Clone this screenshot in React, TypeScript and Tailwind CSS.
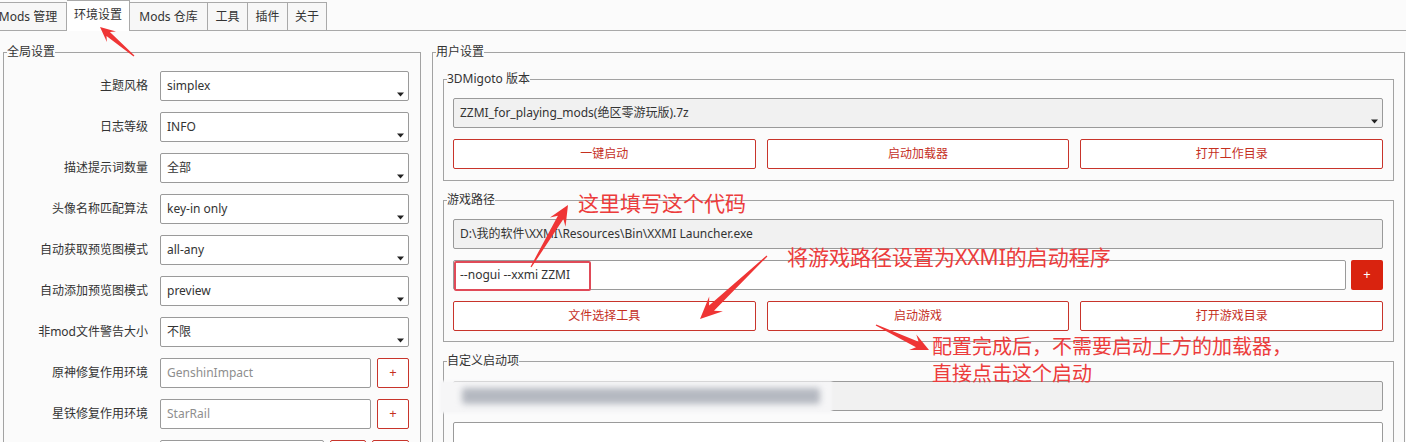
import React from "react";

type Pt = [number, number];

// screenshot-tool style arrow: thin tail, widening shaft, swept head
function arrowPoints(tail: Pt, tip: Pt, head = 18, hw = 9, sw = 3.5) {
  const [x1, y1] = tail;
  const [x2, y2] = tip;
  const dx = x2 - x1;
  const dy = y2 - y1;
  const len = Math.hypot(dx, dy);
  const ux = dx / len;
  const uy = dy / len;
  const nx = -uy;
  const ny = ux;
  const neckX = x2 - ux * head * 0.72;
  const neckY = y2 - uy * head * 0.72;
  const backX = x2 - ux * head;
  const backY = y2 - uy * head;
  const pts: Pt[] = [
    [x1 + nx * 0.6, y1 + ny * 0.6],
    [neckX + nx * sw, neckY + ny * sw],
    [backX + nx * hw, backY + ny * hw],
    [x2, y2],
    [backX - nx * hw, backY - ny * hw],
    [neckX - nx * sw, neckY - ny * sw],
    [x1 - nx * 0.6, y1 - ny * 0.6],
  ];
  return pts.map(p => `${p[0].toFixed(1)},${p[1].toFixed(1)}`).join(" ");
}

const TABS = [
  { label: "Mods 管理", className: "w-[78px] -ml-[11px] border-l" },
  { label: "环境设置", className: "w-[63px]", selected: true },
  { label: "Mods 仓库", className: "w-[78px]" },
  { label: "工具", className: "w-[40px]" },
  { label: "插件", className: "w-[40px]" },
  { label: "关于", className: "w-[39px]" },
];

function Tabs() {
  return (
    <div className="flex h-[31px] items-end border-b border-[#a9a9a9]">
      {TABS.map(tab => (
        <div
          key={tab.label}
          className={
            tab.selected
              ? "-mb-px flex h-[31px] shrink-0 items-center justify-center border-t border-r border-[#a9a9a9] bg-white pb-[2px] text-[12px] text-[#333] " +
                tab.className
              : "flex h-[28px] shrink-0 items-center justify-center border-t border-r border-[#a9a9a9] bg-[#f7f7f7] text-[12px] text-[#333] " +
                tab.className
          }
        >
          {tab.label}
        </div>
      ))}
    </div>
  );
}

function Group({
  title,
  className,
  children,
}: {
  title: string;
  className: string;
  children: React.ReactNode;
}) {
  return (
    <fieldset className={"min-w-0 border border-[#a3a3a3] p-0 " + className}>
      <legend className="ml-[3px] p-0 text-[12px] leading-[16px] text-[#333]">
        {title}
      </legend>
      {children}
    </fieldset>
  );
}

function Caret() {
  return (
    <svg
      className="absolute right-[4px] bottom-[3px]"
      width="7"
      height="5"
      viewBox="0 0 7 5"
    >
      <path d="M0 0.5h7L3.5 4.5z" fill="#222" />
    </svg>
  );
}

function Combo({ value, gray }: { value: string; gray?: boolean }) {
  return (
    <div
      className={
        gray
          ? "relative flex h-[30px] w-full items-center rounded-[2px] border border-[#9a9a9a] bg-[#f1f1f1] pl-[6px] text-[12px] text-[#333]"
          : "relative flex h-[30px] w-full items-center rounded-[2px] border border-[#9a9a9a] bg-white pl-[6px] text-[12px] text-[#333]"
      }
    >
      {value}
      <Caret />
    </div>
  );
}

function Field({
  value,
  placeholder,
  gray,
  className = "",
}: {
  value?: string;
  placeholder?: string;
  gray?: boolean;
  className?: string;
}) {
  return (
    <div
      className={
        (gray
          ? "flex h-[30px] items-center rounded-[2px] border border-[#9a9a9a] bg-[#f1f1f1] pl-[6px] text-[12px] "
          : "flex h-[30px] items-center rounded-[2px] border border-[#9a9a9a] bg-white pl-[6px] text-[12px] ") +
        (value ? "text-[#333] " : "text-[#8e8e8e] ") +
        className
      }
    >
      {value ?? placeholder}
    </div>
  );
}

function OutlineButton({
  children,
  className = "",
}: {
  children?: React.ReactNode;
  className?: string;
}) {
  return (
    <div
      className={
        "flex h-[30px] items-center justify-center rounded-[2px] border border-[#c8342b] bg-white text-[12px] text-[#c5301f] " +
        className
      }
    >
      {children}
    </div>
  );
}

function PlusButton({ className = "" }: { className?: string }) {
  return (
    <OutlineButton className={"shrink-0 text-[13px] " + className}>+</OutlineButton>
  );
}

const COMBO_ROWS = [
  ["主题风格", "simplex"],
  ["日志等级", "INFO"],
  ["描述提示词数量", "全部"],
  ["头像名称匹配算法", "key-in only"],
  ["自动获取预览图模式", "all-any"],
  ["自动添加预览图模式", "preview"],
  ["非mod文件警告大小", "不限"],
];

function Row({ label, children }: { label: string; children: React.ReactNode }) {
  return (
    <div className="flex items-center">
      <div className="w-[144px] shrink-0 text-right text-[12px] text-[#333]">
        {label}
      </div>
      <div className="ml-[12px] flex w-[249px] gap-[6px]">{children}</div>
    </div>
  );
}

function GlobalSettings() {
  return (
    <Group title="全局设置" className="ml-[3px] w-[418px] shrink-0">
      <div className="flex flex-col gap-[11px] pt-[11px] pb-[12px]">
        {COMBO_ROWS.map(([label, value]) => (
          <Row key={label} label={label}>
            <Combo value={value} />
          </Row>
        ))}
        <Row label="原神修复作用环境">
          <Field placeholder="GenshinImpact" className="flex-1" />
          <PlusButton className="w-[32px]" />
        </Row>
        <Row label="星铁修复作用环境">
          <Field placeholder="StarRail" className="flex-1" />
          <PlusButton className="w-[32px]" />
        </Row>
        {/* only the top edge of this row is on screen */}
        <Row label="">
          <Field placeholder="" className="flex-1" />
          <OutlineButton className="w-[36px] shrink-0" />
          <OutlineButton className="w-[37px] shrink-0" />
        </Row>
      </div>
    </Group>
  );
}

function UserSettings() {
  return (
    <Group title="用户设置" className="ml-[11px] w-[973px] shrink-0">
      <div className="flex flex-col gap-[11px] px-[10px] pt-[11px] pb-[12px]">
        <Group title="3DMigoto 版本" className="w-full">
          <div className="flex flex-col gap-[11px] pt-[11px] pr-[10px] pb-[11px] pl-[9px]">
            <Combo value="ZZMI_for_playing_mods(绝区零游玩版).7z" gray />
            <div className="grid grid-cols-3 gap-[11px]">
              <OutlineButton>一键启动</OutlineButton>
              <OutlineButton>启动加载器</OutlineButton>
              <OutlineButton>打开工作目录</OutlineButton>
            </div>
          </div>
        </Group>
        <Group title="游戏路径" className="w-full">
          <div className="flex flex-col gap-[11px] pt-[11px] pr-[10px] pb-[10px] pl-[9px]">
            <Field value="D:\我的软件\XXMI\Resources\Bin\XXMI Launcher.exe" gray />
            <div className="flex gap-[5px]">
              <Field value="--nogui --xxmi ZZMI" className="flex-1" />
              <div className="flex h-[30px] w-[32px] shrink-0 items-center justify-center rounded-[2px] bg-[#d9230f] text-[13px] text-white">
                +
              </div>
            </div>
            <div className="grid grid-cols-3 gap-[11px]">
              <OutlineButton>文件选择工具</OutlineButton>
              <OutlineButton>启动游戏</OutlineButton>
              <OutlineButton>打开游戏目录</OutlineButton>
            </div>
          </div>
        </Group>
        <Group title="自定义启动项" className="w-full">
          <div className="flex flex-col gap-[11px] pt-[12px] pr-[10px] pb-[10px] pl-[9px]">
            <Field value=" " gray />
            <div className="h-[60px] rounded-[2px] border border-[#9a9a9a] bg-white" />
          </div>
        </Group>
      </div>
    </Group>
  );
}

function Annotations() {
  const red = "#ef3535";
  return (
    <>
      {/* mosaic over the custom launch option */}
      <div className="absolute top-[381px] left-[440px] h-[32px] w-[392px] bg-[#f6f6f7] blur-[1px]" />
      <div className="absolute top-[388px] left-[462px] h-[16px] w-[358px] rounded-[3px] bg-[#b5b9c1] blur-[3px]" />

      <div className="absolute top-[261px] left-[454px] h-[30px] w-[137px] rounded-[2px] border-2 border-[#e04a58]" />

      <svg
        className="pointer-events-none absolute top-0 left-0"
        width="1406"
        height="442"
        viewBox="0 0 1406 442"
      >
        <polygon points={arrowPoints([134, 56], [100, 27], 15, 7, 2.6)} fill={red} />
        <polygon points={arrowPoints([531, 267], [568, 205], 20, 9, 3.2)} fill={red} />
        <polygon points={arrowPoints([767, 256], [700, 319], 22, 10, 3.6)} fill={red} />
        <polygon points={arrowPoints([876, 325], [929, 350], 18, 8.5, 3)} fill={red} />
      </svg>

      <div className="absolute top-[193px] left-[578px] text-[21px] leading-none whitespace-nowrap text-[#ec3c3c]">
        这里填写这个代码
      </div>
      <div className="absolute top-[247px] left-[787px] text-[21px] leading-none whitespace-nowrap text-[#ec3c3c]">
        将游戏路径设置为XXMI的启动程序
      </div>
      <div className="absolute top-[333px] left-[932px] text-[20px] leading-[27px] whitespace-nowrap text-[#ec3c3c]">
        配置完成后，不需要启动上方的加载器，
        <br />
        直接点击这个启动
      </div>
    </>
  );
}

export default function App() {
  return (
    <div className="relative h-[442px] w-[1406px] overflow-hidden bg-[#fbfbfb] font-['Noto_Sans','Noto_Sans_CJK_SC',sans-serif]">
      <Tabs />
      <div className="flex items-start pt-[13px]">
        <GlobalSettings />
        <UserSettings />
      </div>
      <Annotations />
    </div>
  );
}
